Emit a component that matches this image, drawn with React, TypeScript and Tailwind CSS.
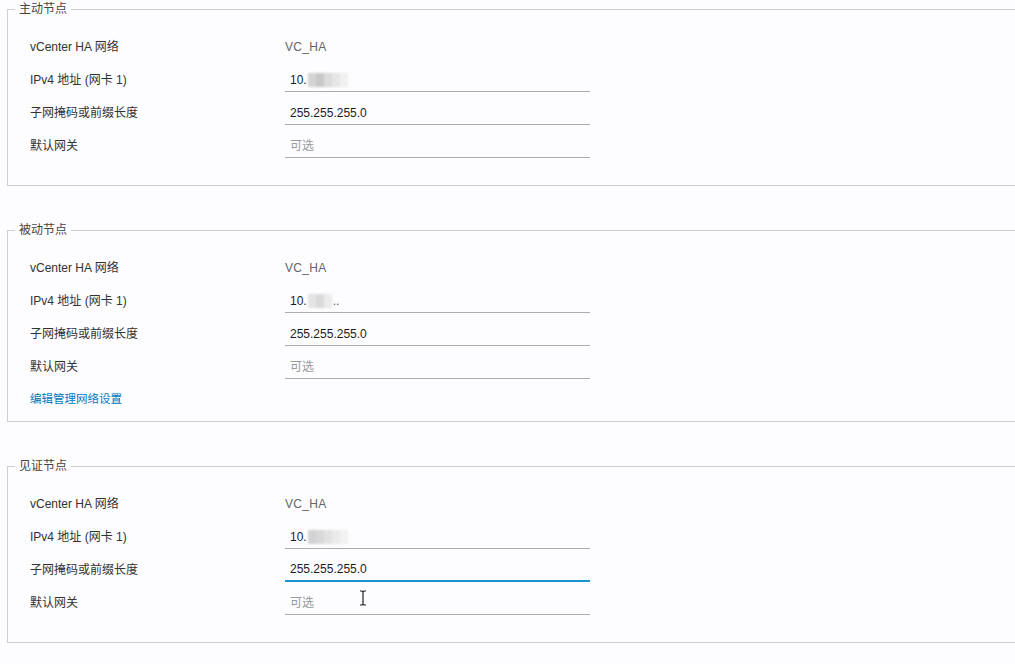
import { ReactNode } from 'react'

type Row = { label: string; kind: 'text' | 'input'; value?: ReactNode; placeholder?: string; focused?: boolean; cursor?: boolean }

function Blur({ shades }: { shades: string[] }) {
  return (
    <span className="inline-flex items-center h-[14px] blur-[1px] ml-[1px]">
      {shades.map((s, i) => (
        <span key={i} className={`inline-block h-[14px] w-[8px] ${s}`} />
      ))}
    </span>
  )
}

function Field({ row }: { row: Row }) {
  const line = row.focused ? 'border-b-2 border-[#1a93d3]' : 'border-b border-[#adadad]'
  return (
    <div className="flex items-center h-[33px]">
      <div className="w-[255px] shrink-0 text-[#333]">{row.label}</div>
      {row.kind === 'text' ? (
        <div className="text-[#666] tracking-[0.3px]">{row.value}</div>
      ) : (
        <div className={`relative w-[305px] h-[24px] mt-[1px] flex items-center pl-[5px] ${line}`}>
          {row.value ? (
            <span className="text-[#1c1c1c] flex items-center">{row.value}</span>
          ) : (
            <span className="text-[#9a9a9a]">{row.placeholder}</span>
          )}
          {row.cursor && (
            <svg className="absolute left-[74px] top-[-1px]" width="8" height="16" viewBox="0 0 8 16">
              <path d="M1 1h2l1 1 1-1h2M4 2v12M1 15h2l1-1 1 1h2" stroke="#222" strokeWidth="1.2" fill="none" />
            </svg>
          )}
        </div>
      )}
    </div>
  )
}

function Section({ title, rows, link, last }: { title: string; rows: Row[]; link?: string; last?: boolean }) {
  return (
    <fieldset
      className={`ml-[7px] border-t border-l border-b border-[#cfcfcf] pl-[22px] pt-[12px] ${
        link ? 'pb-[5px]' : 'pb-[23px]'
      } ${last ? '' : 'mb-[35px]'}`}
    >
      <legend className="ml-[-15px] px-[4px] h-[18px] leading-[18px] text-[#444]">{title}</legend>
      {rows.map((r, i) => (
        <Field key={i} row={r} />
      ))}
      {link && (
        <div className="h-[33px] flex items-center text-[#0079b8] text-[11.5px]">{link}</div>
      )}
    </fieldset>
  )
}

export default function App() {
  const mk = (ip: ReactNode, focused?: boolean, cursor?: boolean): Row[] => [
    { label: 'vCenter HA 网络', kind: 'text', value: 'VC_HA' },
    { label: 'IPv4 地址 (网卡 1)', kind: 'input', value: ip },
    { label: '子网掩码或前缀长度', kind: 'input', value: '255.255.255.0', focused },
    { label: '默认网关', kind: 'input', placeholder: '可选', cursor },
  ]

  return (
    <div
      className="w-[1015px] h-[664px] overflow-hidden bg-[#fdfcfe] text-[12px]"
      style={{ fontFamily: '"Liberation Sans", "Noto Sans CJK SC", sans-serif' }}
    >
      <Section
        title="主动节点"
        rows={mk(
          <>
            10.<Blur shades={['bg-[#d4d4d4]', 'bg-[#c8c8c8]', 'bg-[#dcdcdc]', 'bg-[#e6e6e6]', 'bg-[#f0f0f0]']} />
          </>
        )}
      />
      <Section
        title="被动节点"
        link="编辑管理网络设置"
        rows={mk(
          <>
            10.<Blur shades={['bg-[#e4e4e4]', 'bg-[#dadada]', 'bg-[#ececec]']} />
            <span className="text-[#555] ml-[1px]">..</span>
          </>
        )}
      />
      <Section
        title="见证节点"
        last
        rows={mk(
          <>
            10.<Blur shades={['bg-[#d2d2d2]', 'bg-[#d8d8d8]', 'bg-[#e2e2e2]', 'bg-[#ebebeb]', 'bg-[#f2f2f2]']} />
          </>,
          true,
          true
        )}
      />
    </div>
  )
}
